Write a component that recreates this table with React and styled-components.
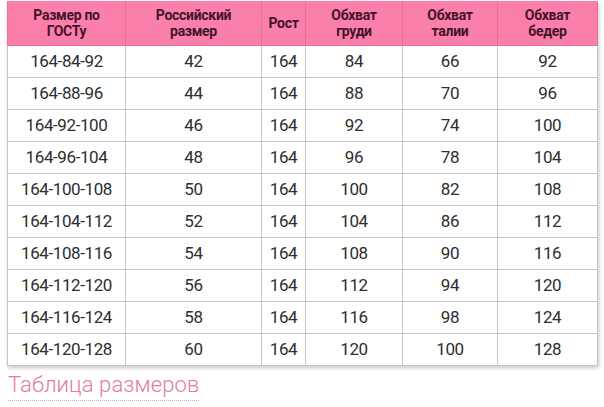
import React from 'react';
import styled, { createGlobalStyle } from 'styled-components';

const GlobalStyle = createGlobalStyle`
  html, body {
    margin: 0;
    padding: 0;
    background: #ffffff;
    font-family: Roboto, "Noto Sans", sans-serif;
  }
`;

const Page = styled.div`
  width: 604px;
  height: 407px;
  padding: 1px 0 0 7px;
  box-sizing: border-box;
  overflow: hidden;
`;

const SizeTable = styled.table`
  width: 590px;
  table-layout: fixed;
  border-collapse: collapse;
  box-shadow: 1px 2px 4px rgba(0, 0, 0, 0.22);
  background: #fff;
`;

const HeadCell = styled.th`
  height: 44px;
  padding: 0 4px;
  background: #fa7fab;
  border: 1px solid #ec6f9b;
  border-top: none;
  color: #431429;
  font-size: 14px;
  font-weight: 700;
  line-height: 16px;
  letter-spacing: -0.3px;
  text-align: center;
  vertical-align: middle;
  box-sizing: border-box;
`;

const Cell = styled.td`
  height: 32px;
  padding: 0;
  border: 1px solid #c6c6c6;
  color: #2e2e2e;
  font-size: 17px;
  font-weight: 400;
  letter-spacing: -0.4px;
  text-align: center;
  vertical-align: middle;
  box-sizing: border-box;
`;

const Caption = styled.div`
  margin-top: 6px;
  margin-left: 1px;
  display: inline-block;
  color: #e27aa6;
  font-size: 22px;
  font-weight: 300;
  line-height: 26px;
  letter-spacing: 0.1px;
  border-bottom: 1px dotted #b9b9b9;
  padding-bottom: 2px;
`;

const widths = [118, 136, 44, 97, 95, 100];

const headers = [
  ['Размер по', 'ГОСТу'],
  ['Российский', 'размер'],
  ['Рост'],
  ['Обхват', 'груди'],
  ['Обхват', 'талии'],
  ['Обхват', 'бедер'],
];

const rows = [
  ['164-84-92', 42, 164, 84, 66, 92],
  ['164-88-96', 44, 164, 88, 70, 96],
  ['164-92-100', 46, 164, 92, 74, 100],
  ['164-96-104', 48, 164, 96, 78, 104],
  ['164-100-108', 50, 164, 100, 82, 108],
  ['164-104-112', 52, 164, 104, 86, 112],
  ['164-108-116', 54, 164, 108, 90, 116],
  ['164-112-120', 56, 164, 112, 94, 120],
  ['164-116-124', 58, 164, 116, 98, 124],
  ['164-120-128', 60, 164, 120, 100, 128],
];

export default function App() {
  return (
    <Page>
      <GlobalStyle />
      <SizeTable>
        <colgroup>
          {widths.map((w, i) => (
            <col key={i} style={{ width: w }} />
          ))}
        </colgroup>
        <thead>
          <tr>
            {headers.map((lines, i) => (
              <HeadCell key={i}>
                {lines.map((l, j) => (
                  <React.Fragment key={j}>
                    {j > 0 && <br />}
                    {l}
                  </React.Fragment>
                ))}
              </HeadCell>
            ))}
          </tr>
        </thead>
        <tbody>
          {rows.map((row, i) => (
            <tr key={i}>
              {row.map((v, j) => (
                <Cell key={j}>{v}</Cell>
              ))}
            </tr>
          ))}
        </tbody>
      </SizeTable>
      <Caption>Таблица размеров</Caption>
    </Page>
  );
}
